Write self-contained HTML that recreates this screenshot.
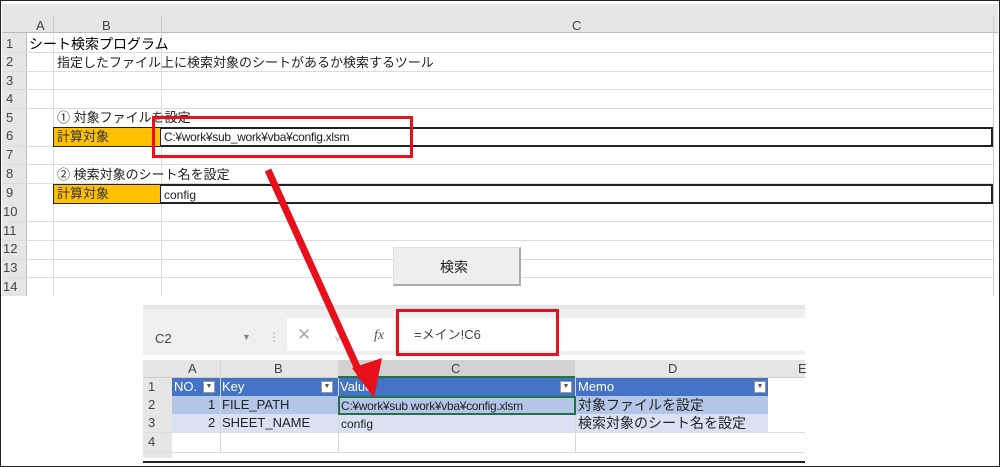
<!DOCTYPE html>
<html><head><meta charset="utf-8"><style>
*{margin:0;padding:0;box-sizing:border-box}
body{width:1000px;height:467px;background:#fff;position:relative;overflow:hidden;font-family:"Liberation Sans","Noto Sans CJK JP",sans-serif;color:#222}
.a{position:absolute}
.t{position:absolute;font-size:13px;line-height:18px;white-space:nowrap}
.hl{position:absolute;height:1px;background:#dcdcdc}
.rn{position:absolute;left:6px;font-size:13px;color:#444;line-height:18px}
</style></head><body>
<div class="a" style="left:0;top:0;width:1000px;height:467px;border:1px solid #222"></div>
<!-- top sheet -->
<div class="a" style="left:2px;top:4px;width:996px;height:29px;background:#e6e6e6;border-bottom:1px solid #bbb"></div>
<div class="a" style="left:2px;top:33px;width:25px;height:263px;background:#e6e6e6;border-right:1px solid #bbb"></div>
<div class="t" style="left:36px;top:17px;color:#444">A</div>
<div class="t" style="left:102px;top:17px;color:#444">B</div>
<div class="t" style="left:572px;top:17px;color:#444">C</div>
<div class="a" style="left:53px;top:16px;width:1px;height:17px;background:#ccc"></div>
<div class="a" style="left:161px;top:16px;width:1px;height:17px;background:#ccc"></div>
<div class="a" style="left:53px;top:33px;width:1px;height:263px;background:#dcdcdc"></div>
<div class="a" style="left:161px;top:33px;width:1px;height:263px;background:#dcdcdc"></div>
<div class="a" style="left:993px;top:16px;width:1px;height:280px;background:#ccc"></div>
<div class="hl" style="left:2px;top:52px;width:991px"></div>
<div class="hl" style="left:2px;top:71px;width:991px"></div>
<div class="hl" style="left:2px;top:89px;width:991px"></div>
<div class="hl" style="left:2px;top:108px;width:991px"></div>
<div class="hl" style="left:2px;top:146px;width:991px"></div>
<div class="hl" style="left:2px;top:164px;width:991px"></div>
<div class="hl" style="left:2px;top:183px;width:991px"></div>
<div class="hl" style="left:2px;top:221px;width:991px"></div>
<div class="hl" style="left:2px;top:240px;width:991px"></div>
<div class="hl" style="left:2px;top:259px;width:991px"></div>
<div class="hl" style="left:2px;top:277px;width:991px"></div>
<div class="rn" style="top:35px">1</div><div class="rn" style="top:53px">2</div><div class="rn" style="top:72px">3</div><div class="rn" style="top:90px">4</div><div class="rn" style="top:109px">5</div><div class="rn" style="top:127px">6</div><div class="rn" style="top:146px">7</div><div class="rn" style="top:165px">8</div><div class="rn" style="top:184px">9</div>
<div class="rn" style="top:203px;left:3px">10</div><div class="rn" style="top:222px;left:3px">11</div><div class="rn" style="top:240px;left:3px">12</div><div class="rn" style="top:259px;left:3px">13</div><div class="rn" style="top:278px;left:3px">14</div>
<div class="t" style="left:29px;top:35px;font-size:14px;color:#000">シート検索プログラム</div>
<div class="t" style="left:57px;top:54px">指定したファイル上に検索対象のシートがあるか検索するツール</div>
<div class="t" style="left:57px;top:109px">① 対象ファイルを設定</div>
<div class="t" style="left:57px;top:166px">② 検索対象のシート名を設定</div>
<div class="a" style="left:53px;top:127px;width:940px;height:20px;border:2px solid #222;background:#fff"></div>
<div class="a" style="left:54px;top:128px;width:107px;height:18px;background:#ffc000;border-right:1px solid #222"></div>
<div class="t" style="left:57px;top:128px;color:#333">計算対象</div>
<div class="t" style="left:164px;top:128px;font-size:12px;letter-spacing:-0.3px">C:¥work¥sub_work¥vba¥config.xlsm</div>
<div class="a" style="left:53px;top:184px;width:940px;height:20px;border:2px solid #222;background:#fff"></div>
<div class="a" style="left:54px;top:185px;width:107px;height:18px;background:#ffc000;border-right:1px solid #222"></div>
<div class="t" style="left:57px;top:185px;color:#333">計算対象</div>
<div class="t" style="left:164px;top:186px;font-size:12px">config</div>
<div class="a" style="left:152px;top:116px;width:261px;height:42px;border:3px solid #e8101a"></div>
<div class="a" style="left:393px;top:247px;width:128px;height:39px;background:#efefef;border-right:2px solid #aaa;border-bottom:2px solid #aaa;border-top:1px solid #e0e0e0;border-left:1px solid #e0e0e0"></div>
<div class="t" style="left:440px;top:258px;font-size:14px">検索</div>
<!-- bottom screenshot -->
<div class="a" style="left:143px;top:300px;width:662px;height:162px;background:#fff"></div>
<div class="a" style="left:143px;top:305px;width:662px;height:50px;background:#f0f0f0;border-top:4px solid #e6e6e6"></div>
<div class="t" style="left:155px;top:330px;font-size:13px;color:#444">C2</div>
<div class="t" style="left:242px;top:328px;font-size:9px;color:#888">▼</div>
<div class="t" style="left:268px;top:328px;font-size:12px;color:#aaa">⋮</div>
<div class="a" style="left:287px;top:318px;width:108px;height:33px;background:#fff"></div>
<div class="t" style="left:297px;top:326px;font-size:17px;color:#aaa">✕</div>
<div class="t" style="left:335px;top:328px;font-size:13px;color:#bbb">✓</div>
<div class="t" style="left:374px;top:327px;font-size:14px;font-style:italic;font-family:'Liberation Serif',serif;color:#555">fx</div>
<div class="a" style="left:396px;top:318px;width:409px;height:33px;background:#fff"></div>
<div class="t" style="left:414px;top:326px;font-size:13px;color:#444">=メイン!C6</div>
<div class="a" style="left:396px;top:309px;width:163px;height:47px;border:3px solid #e8101a"></div>
<div class="a" style="left:143px;top:360px;width:662px;height:18px;background:#e6e6e6;border-bottom:1px solid #ccc"></div>
<div class="a" style="left:338px;top:360px;width:237px;height:18px;background:#d2d2d2;border-bottom:2px solid #217346"></div>
<div class="t" style="left:188px;top:360px;color:#444">A</div>
<div class="t" style="left:274px;top:360px;color:#444">B</div>
<div class="t" style="left:451px;top:360px;color:#444">C</div>
<div class="t" style="left:668px;top:360px;color:#444">D</div>
<div class="t" style="left:798px;top:360px;color:#444">E</div>
<div class="a" style="left:143px;top:378px;width:29px;height:80px;background:#e6e6e6"></div>
<div class="a" style="left:172px;top:378px;width:596px;height:18px;background:#4472c4"></div>
<div class="a" style="left:172px;top:396px;width:596px;height:18px;background:#b4c6e7"></div>
<div class="a" style="left:172px;top:414px;width:596px;height:18px;background:#d9e1f2"></div>
<div class="a" style="left:143px;top:432px;width:662px;height:1px;background:#ddd"></div>
<div class="a" style="left:143px;top:452px;width:662px;height:1px;background:#ddd"></div>
<div class="a" style="left:220px;top:360px;width:1px;height:92px;background:#d8d8d8"></div>
<div class="a" style="left:338px;top:378px;width:1px;height:74px;background:#d8d8d8"></div>
<div class="a" style="left:575px;top:378px;width:1px;height:74px;background:#d8d8d8"></div>
<div class="t" style="left:148px;top:378px;color:#444">1</div><div class="t" style="left:148px;top:396px;color:#444">2</div><div class="t" style="left:148px;top:414px;color:#444">3</div><div class="t" style="left:148px;top:433px;color:#444">4</div>
<div class="t" style="left:174px;top:378px;color:#fff">NO.</div>
<div class="t" style="left:222px;top:378px;color:#fff">Key</div>
<div class="t" style="left:340px;top:378px;color:#fff">Value</div>
<div class="t" style="left:578px;top:378px;color:#fff">Memo</div>
<div class="a" style="left:203px;top:381px;width:12px;height:12px;background:#fff;border:1px solid #999;font-size:7px;line-height:10px;text-align:center;color:#555">▼</div>
<div class="a" style="left:321px;top:381px;width:12px;height:12px;background:#fff;border:1px solid #999;font-size:7px;line-height:10px;text-align:center;color:#555">▼</div>
<div class="a" style="left:560px;top:381px;width:12px;height:12px;background:#fff;border:1px solid #999;font-size:7px;line-height:10px;text-align:center;color:#555">▼</div>
<div class="a" style="left:754px;top:381px;width:12px;height:12px;background:#fff;border:1px solid #999;font-size:7px;line-height:10px;text-align:center;color:#555">▼</div>
<div class="t" style="left:208px;top:396px">1</div><div class="t" style="left:222px;top:396px">FILE_PATH</div>
<div class="t" style="left:208px;top:414px">2</div><div class="t" style="left:222px;top:414px">SHEET_NAME</div>
<div class="t" style="left:341px;top:397px;font-size:12px;letter-spacing:-0.3px">C:¥work¥sub work¥vba¥config.xlsm</div>
<div class="t" style="left:341px;top:415px;font-size:12px">config</div>
<div class="t" style="left:578px;top:396px;font-size:14px">対象ファイルを設定</div>
<div class="t" style="left:578px;top:414px;font-size:14px">検索対象のシート名を設定</div>
<div class="a" style="left:338px;top:396px;width:238px;height:19px;border:2px solid #217346"></div>
<div class="a" style="left:143px;top:461px;width:662px;height:2px;background:#222"></div>
<!-- arrow -->
<svg class="a" style="left:0;top:0" width="1000" height="467">
<line x1="268" y1="170" x2="362" y2="378" stroke="#e8101a" stroke-width="7"/>
<polygon points="352,368 382,358 374,398" fill="#e8101a"/>
</svg>
</body></html>
